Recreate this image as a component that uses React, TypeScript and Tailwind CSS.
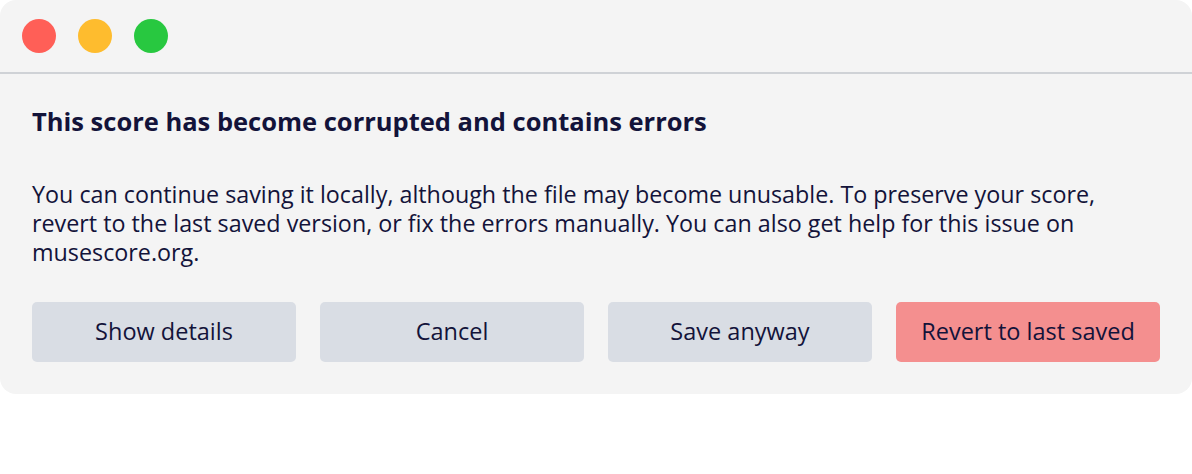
const buttons = [
  { label: "Show details", accent: false },
  { label: "Cancel", accent: false },
  { label: "Save anyway", accent: false },
  { label: "Revert to last saved", accent: true },
];

export default function App() {
  return (
    <div className="w-[1192px] h-[474px] bg-white font-['Open_Sans',sans-serif] text-[#13133a]">
      <div className="bg-[#f4f4f4] rounded-[16px] h-[394px] flex flex-col">
        {/* Title bar */}
        <div className="h-[74px] flex items-center gap-[22px] pl-[22px] border-b-2 border-[#cfd2d6]">
          <span className="w-[34px] h-[34px] rounded-full bg-[#ff5f57]" />
          <span className="w-[34px] h-[34px] rounded-full bg-[#febc2e]" />
          <span className="w-[34px] h-[34px] rounded-full bg-[#28c840]" />
        </div>

        {/* Body */}
        <div className="px-8 pt-[31px]">
          <h1 className="text-[25.5px] font-bold leading-[32px]">
            This score has become corrupted and contains errors
          </h1>
          <p className="mt-[43px] text-[23.3px] leading-[29px]">
            You can continue saving it locally, although the file may become unusable. To preserve your score,
            <br />
            revert to the last saved version, or fix the errors manually. You can also get help for this issue on
            <br />
            musescore.org.
          </p>
          <div className="mt-[35px] grid grid-cols-4 gap-6">
            {buttons.map((b) => (
              <button
                key={b.label}
                className={`h-[60px] rounded-[5px] text-[23.5px] ${
                  b.accent ? "bg-[#f48f8f]" : "bg-[#d9dde4]"
                }`}
              >
                {b.label}
              </button>
            ))}
          </div>
        </div>
      </div>
    </div>
  );
}
